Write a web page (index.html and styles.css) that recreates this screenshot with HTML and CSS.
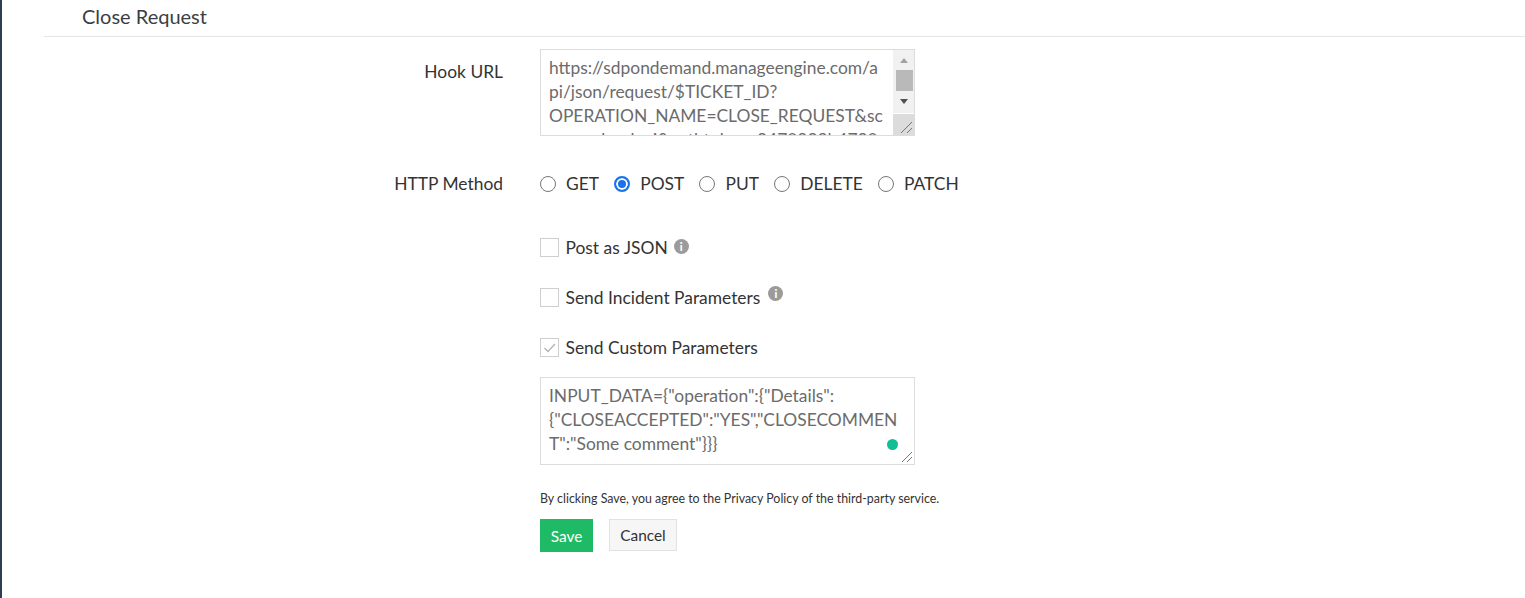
FILE: index.html
```html
<!DOCTYPE html>
<html lang="en">
<head>
<meta charset="utf-8">
<title>Close Request</title>
<link rel="stylesheet" href="styles.css">
</head>
<body>
<div class="page">
  <h1 class="title">Close Request</h1>
  <form class="form">
    <div class="row row-url">
      <label class="label">Hook URL</label>
      <div class="field">
        <div class="area-wrap">
          <textarea class="area area-url" readonly>https://sdpondemand.manageengine.com/api/json/request/$TICKET_ID?OPERATION_NAME=CLOSE_REQUEST&amp;scope=sdpodapi&amp;authtoken=8470989b4780</textarea>
          <div class="scrollbar">
            <svg class="arrow" width="10" height="7" viewBox="0 0 10 7"><path d="M5 1 9 6H1z" fill="#a3a3a3"/></svg>
            <div class="thumb"></div>
            <svg class="arrow" width="10" height="7" viewBox="0 0 10 7"><path d="M1 1h8L5 6z" fill="#505050"/></svg>
          </div>
          <div class="corner">
            <svg width="21" height="21" viewBox="0 0 21 21"><path d="M8 19 19 8M14 19l5-5" stroke="#777" stroke-width="1" fill="none"/></svg>
          </div>
        </div>
      </div>
    </div>
    <div class="row row-method">
      <label class="label">HTTP Method</label>
      <div class="field radios">
        <span class="radio-item"><span class="radio"></span>GET</span>
        <span class="radio-item"><span class="radio on"></span>POST</span>
        <span class="radio-item"><span class="radio"></span>PUT</span>
        <span class="radio-item"><span class="radio"></span>DELETE</span>
        <span class="radio-item"><span class="radio"></span>PATCH</span>
      </div>
    </div>
    <div class="checks">
      <div class="check-item">
        <span class="box"></span>Post as JSON
        <span class="info info-mid">i</span>
      </div>
      <div class="check-item">
        <span class="box"></span>Send Incident Parameters
        <span class="info info-high">i</span>
      </div>
      <div class="check-item">
        <span class="box">
          <svg width="17" height="17" viewBox="0 0 17 17"><path d="M3.5 9 7 12.5 14 5" stroke="#b4b4b4" stroke-width="1.3" fill="none"/></svg>
        </span>Send Custom Parameters
      </div>
      <div class="area-wrap area-wrap-params">
        <textarea class="area area-params" readonly>INPUT_DATA={"operation":{"Details":{"CLOSEACCEPTED":"YES","CLOSECOMMENT":"Some comment"}}}</textarea>
        <span class="dot"></span>
        <svg class="grip" width="14" height="14" viewBox="0 0 14 14"><path d="M2 12 12 2M7 12l5-5" stroke="#777" stroke-width="1" fill="none"/></svg>
      </div>
      <p class="note">By clicking Save, you agree to the Privacy Policy of the third-party service.</p>
      <div class="actions">
        <button type="button" class="btn btn-save">Save</button>
        <button type="button" class="btn btn-cancel">Cancel</button>
      </div>
    </div>
  </form>
</div>
</body>
</html>
```
FILE: styles.css
```css
* { box-sizing: border-box; }
html, body { margin: 0; height: 100%; }
body {
  background: #fff;
  color: #333;
  font-family: Lato, "Open Sans", sans-serif;
  font-size: 17.4px;
  overflow: hidden;
}
.page {
  height: 598px;
  border-left: 2px solid #2e3d4f;
  padding-left: 42px;
}
.title {
  margin: 0;
  height: 37px;
  padding: 4px 0 0 38px;
  font-size: 20px;
  line-height: 25px;
  font-weight: 400;
  color: #3a3f45;
  border-bottom: 1px solid #e6e6e6;
}
.form { display: block; padding-top: 12px; }
.row { display: flex; }
.label {
  width: 459px;
  text-align: right;
  flex: none;
  color: #333;
}
.field { margin-left: 37px; }
.row-url .label { padding-top: 10px; line-height: 25px; }
.row-method { margin-top: 36px; line-height: 24px; }
.area-wrap { position: relative; width: 375px; }
.area {
  display: block;
  width: 100%;
  border: 1px solid #dcdcdc;
  padding: 6px 8px 4px;
  font: inherit;
  line-height: 24px;
  color: #6b6b6b;
  background: #fff;
  outline: none;
  overflow: hidden;
  resize: none;
  overflow-wrap: anywhere;
}
.area-url { height: 87px; padding-right: 30px; }
.area-params { height: 88px; padding-right: 12px; }
.scrollbar {
  position: absolute;
  top: 1px;
  right: 1px;
  width: 21px;
  height: 63px;
  background: #f1f1f1;
  display: flex;
  flex-direction: column;
  align-items: center;
  padding-top: 7px;
}
.arrow { flex: none; }
.thumb { width: 17px; height: 21px; margin: 6px 0 7px 1px; background: #b9b9b9; flex: none; }
.corner {
  position: absolute;
  right: 1px;
  bottom: 1px;
  width: 21px;
  height: 21px;
  background: #dcdcdc;
}
.corner svg { display: block; }
.radios { display: flex; align-items: center; }
.radio-item { display: flex; align-items: center; margin-right: 15.2px; }
.radio {
  width: 16px;
  height: 16px;
  border: 1px solid #767676;
  border-radius: 50%;
  margin-right: 10px;
  background: #fff;
}
.radio.on {
  border: 2px solid #1a73e8;
  background: #1a73e8;
  box-shadow: inset 0 0 0 2px #fff;
}
.checks { margin-left: 496px; padding-top: 39px; }
.check-item { display: flex; align-items: center; height: 24px; margin-bottom: 26px; }
.box {
  width: 19px;
  height: 19px;
  border: 1px solid #cfcfcf;
  margin-right: 6.5px;
  background: #fff;
  flex: none;
}
.box svg { display: block; }
.info {
  display: inline-flex;
  align-items: center;
  justify-content: center;
  width: 15px;
  height: 15px;
  margin-left: 7px;
  border-radius: 50%;
  background: #9b9b9b;
  color: #fff;
  font-size: 11px;
  font-weight: 900;
  line-height: 1;
}
.info-mid { margin-left: 6px; margin-bottom: 2px; }
.info-high { margin-left: 8px; margin-bottom: 8px; }
.area-wrap-params { margin-top: -8px; }
.dot {
  position: absolute;
  right: 17px;
  bottom: 15px;
  width: 11px;
  height: 11px;
  border-radius: 50%;
  background: #12bf94;
}
.grip { position: absolute; right: 1px; bottom: 1px; }
.note {
  margin: 24px 0 0;
  font-size: 12.4px;
  line-height: 20px;
  color: #333;
}
.actions { display: flex; gap: 16px; margin-top: 10px; align-items: flex-start; }
.btn { font: inherit; font-size: 15.4px; padding: 0; cursor: pointer; }
.btn-save {
  width: 53px;
  height: 33px;
  background: #1fba66;
  color: #fff;
  border: none;
}
.btn-cancel {
  width: 68px;
  height: 32px;
  background: #f6f6f6;
  color: #333;
  border: 1px solid #e2e2e2;
}
```
